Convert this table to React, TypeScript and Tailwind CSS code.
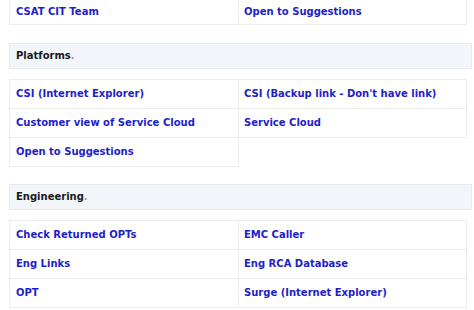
import React from "react";

const font = { fontFamily: '"DejaVu Sans", Verdana, sans-serif' };

function Cell({ text, right }: { text?: string; right?: boolean }) {
  return (
    <div
      className={`h-[29px] flex items-center border-b border-[#ececec] ${
        right ? "pl-[5px] border-r" : "pl-[6px] border-l border-r"
      }`}
    >
      {text && <a className="text-[10px] font-bold text-[#1e1ec8] leading-none">{text}</a>}
    </div>
  );
}

function Grid({ rows }: { rows: [string, string | undefined][] }) {
  return (
    <div className="w-[458px] grid grid-cols-[230px_228px] border-t border-[#ececec]">
      {rows.map(([a, b], i) => (
        <React.Fragment key={i}>
          <Cell text={a} />
          {b !== undefined ? <Cell text={b} right /> : <div />}
        </React.Fragment>
      ))}
    </div>
  );
}

function Header({ title }: { title: string }) {
  return (
    <div className="w-[463px] h-[26px] flex items-center pl-[6px] bg-[#f2f5fa] border border-[#e6ebf1]">
      <span className="text-[10px] font-bold text-[#1a1a1a] leading-none">
        {title}
        <span className="text-[#999]">.</span>
      </span>
    </div>
  );
}

export default function App() {
  return (
    <div className="w-[474px] h-[310px] overflow-hidden bg-white pl-[9px]" style={font}>
      <div className="w-[458px] grid grid-cols-[230px_228px]">
        <div className="h-[25px] flex items-center pl-[6px] pb-[1px] border-b border-l border-r border-[#ececec]">
          <a className="text-[10px] font-bold text-[#1e1ec8] leading-none">CSAT CIT Team</a>
        </div>
        <div className="h-[25px] flex items-center pl-[5px] pb-[1px] border-b border-r border-[#ececec]">
          <a className="text-[10px] font-bold text-[#1e1ec8] leading-none">Open to Suggestions</a>
        </div>
      </div>
      <div className="mt-[18px]">
        <Header title="Platforms" />
      </div>
      <div className="mt-[10px]">
        <Grid
          rows={[
            ["CSI (Internet Explorer)", "CSI (Backup link - Don't have link)"],
            ["Customer view of Service Cloud", "Service Cloud"],
            ["Open to Suggestions", undefined],
          ]}
        />
      </div>
      <div className="mt-[17px]">
        <Header title="Engineering" />
      </div>
      <div className="mt-[10px]">
        <Grid
          rows={[
            ["Check Returned OPTs", "EMC Caller"],
            ["Eng Links", "Eng RCA Database"],
            ["OPT", "Surge (Internet Explorer)"],
          ]}
        />
      </div>
    </div>
  );
}
